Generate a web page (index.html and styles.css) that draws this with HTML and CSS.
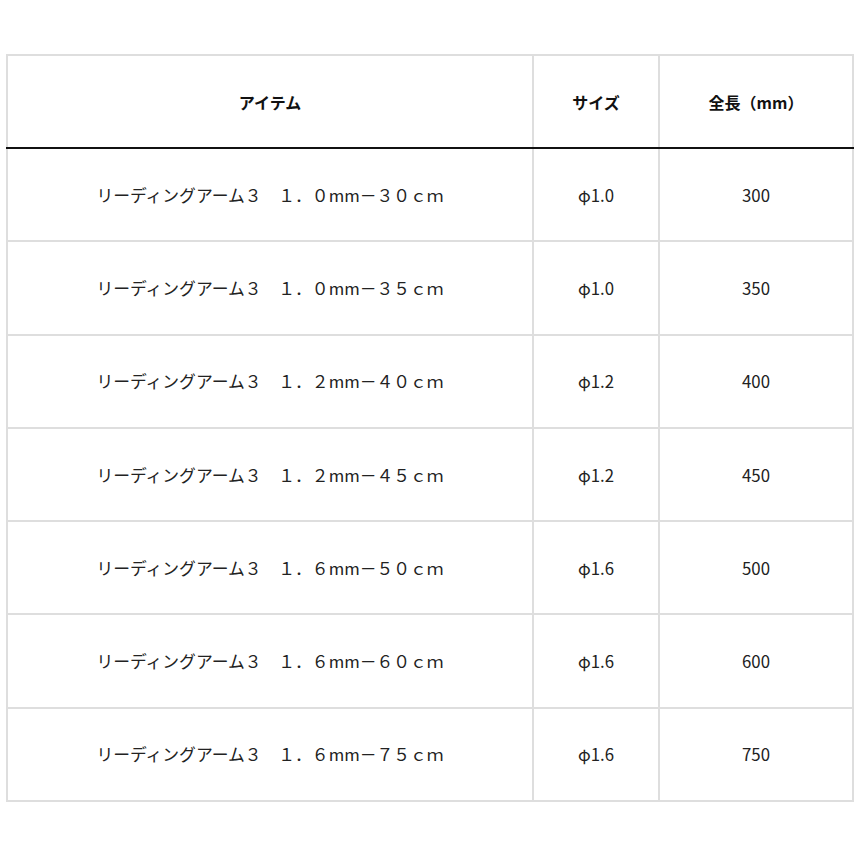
FILE: index.html
```html
<!DOCTYPE html>
<html lang="ja">
<head>
<meta charset="utf-8">
<link rel="stylesheet" href="styles.css">
</head>
<body>
<table class="spec">
  <colgroup>
    <col class="c-item">
    <col class="c-size">
    <col class="c-len">
  </colgroup>
  <thead>
    <tr><th>アイテム</th><th>サイズ</th><th>全長（mm）</th></tr>
  </thead>
  <tbody>
    <tr><td>リーディングアーム３　１．０mm－３０ｃｍ</td><td>φ1.0</td><td>300</td></tr>
    <tr><td>リーディングアーム３　１．０mm－３５ｃｍ</td><td>φ1.0</td><td>350</td></tr>
    <tr><td>リーディングアーム３　１．２mm－４０ｃｍ</td><td>φ1.2</td><td>400</td></tr>
    <tr><td>リーディングアーム３　１．２mm－４５ｃｍ</td><td>φ1.2</td><td>450</td></tr>
    <tr><td>リーディングアーム３　１．６mm－５０ｃｍ</td><td>φ1.6</td><td>500</td></tr>
    <tr><td>リーディングアーム３　１．６mm－６０ｃｍ</td><td>φ1.6</td><td>600</td></tr>
    <tr><td>リーディングアーム３　１．６mm－７５ｃｍ</td><td>φ1.6</td><td>750</td></tr>
  </tbody>
</table>
</body>
</html>
```
FILE: styles.css
```css
html, body {
  margin: 0;
  padding: 0;
  background: #fff;
}
body {
  font-family: "Noto Sans CJK JP", "Noto Sans", sans-serif;
  font-size: 16px;
  color: #222;
  padding-top: 54px;
  padding-left: 6px;
}
.spec {
  border-collapse: collapse;
  width: 846px;
  table-layout: fixed;
}
.c-item { width: 526px; }
.c-size { width: 126px; }
.c-len { width: 194px; }
.spec th, .spec td {
  border: 2px solid #dedede;
  text-align: center;
  vertical-align: middle;
  padding: 0;
}
.spec th {
  height: 91px;
  font-weight: 700;
  color: #111;
  border-bottom: 2px solid #111;
}
.spec td {
  height: 91.3px;
  font-size: 16.8px;
}
```
